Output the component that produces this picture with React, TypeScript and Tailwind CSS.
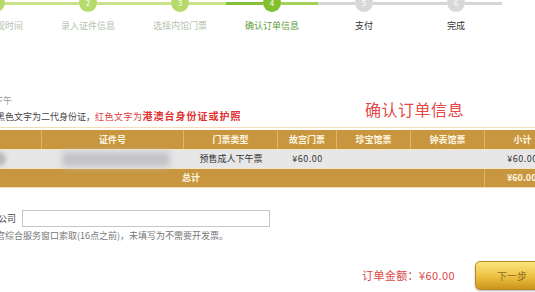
const steps = [
  { n: 1, label: '选择参观时间', state: 'done' },
  { n: 2, label: '录入证件信息', state: 'done' },
  { n: 3, label: '选择内馆门票', state: 'done' },
  { n: 4, label: '确认订单信息', state: 'current' },
  { n: 5, label: '支付', state: 'todo' },
  { n: 6, label: '完成', state: 'todo' },
]

const lineColors: [string, string][] = [
  ['bg-[#c9e389]', 'bg-[#c9e389]'],
  ['bg-[#c9e389]', 'bg-[#c9e389]'],
  ['bg-[#c9e389]', 'bg-[#c9e389]'],
  ['bg-[#86bf3a]', 'bg-[#a3d058]'],
  ['bg-[#d6d6d6]', 'bg-[#d6d6d6]'],
  ['bg-[#d6d6d6]', 'bg-[#d6d6d6]'],
]

function Steps() {
  return (
    <div className="flex ml-[-50px] mt-[-6px]">
      {steps.map((step, i) => (
        <div key={step.n} className="w-[92px] flex flex-col items-center">
          <div className="flex w-full items-center h-[18px]">
            <div className={`flex-1 h-[3px] ${lineColors[i][0]}`} />
            <div
              className={
                step.state === 'done'
                  ? 'size-[18px] rounded-full bg-[#b7db6a] text-white text-[8px] flex items-center justify-center'
                  : step.state === 'current'
                    ? 'size-[18px] rounded-full bg-[#82c030] text-white text-[8px] flex items-center justify-center'
                    : 'size-[18px] rounded-full bg-[#d8d8d8] text-white text-[8px] flex items-center justify-center'
              }
            >
              {step.n}
            </div>
            <div className={`flex-1 h-[3px] ${lineColors[i][1]}`} />
          </div>
          <span
            className={
              step.state === 'done'
                ? 'mt-[7px] text-[9px] leading-[13px] text-[#b4bfae]'
                : step.state === 'current'
                  ? 'mt-[7px] text-[9px] leading-[13px] text-[#5b9c3a]'
                  : 'mt-[7px] text-[9px] leading-[13px] text-[#333]'
            }
          >
            {step.label}
          </span>
        </div>
      ))}
    </div>
  )
}

const cols = 'grid grid-cols-[102px_142px_94px_59px_74px_74px_75px]'

export default function App() {
  return (
    <div className="w-[535px] h-[292px] overflow-hidden bg-white font-['Noto_Sans_CJK_SC',sans-serif]">
      <Steps />

      <div className="flex items-center mt-[61px]">
        <div className="w-[365px] flex flex-col text-[9px] leading-[15px]">
          <span className="ml-[-6px] text-[#999]">下午</span>
          <span className="ml-[-4px] text-[#444] whitespace-nowrap">
            黑色文字为二代身份证，
            <span className="text-[#e03c3c] tracking-[0.5px]">红色文字为</span>
            <span className="text-[#e03030] font-bold text-[10px] tracking-[1px]">港澳台身份证或护照</span>
          </span>
        </div>
        <h1 className="text-[16px] leading-[20px] text-[#e24a4a] tracking-[0.5px]">确认订单信息</h1>
      </div>

      <div className="ml-[-60px] w-[620px] mt-[3px] border-t border-[#f3dcb8] pt-[2px] text-[9px]">
        <div className={`${cols} h-[19px] bg-[#c8963f] text-[#fff6e2] font-bold`}>
          <div className="border-r border-[#dbb574]" />
          <div className="border-r border-[#dbb574] flex items-center justify-center">证件号</div>
          <div className="border-r border-[#dbb574] flex items-center justify-center">门票类型</div>
          <div className="border-r border-[#dbb574] flex items-center justify-center">故宫门票</div>
          <div className="border-r border-[#dbb574] flex items-center justify-center">珍宝馆票</div>
          <div className="border-r border-[#dbb574] flex items-center justify-center">钟表馆票</div>
          <div className="flex items-center justify-center">小计</div>
        </div>
        <div className={`${cols} h-[20px] bg-[#e7e7e7] text-[#333] border-y border-[#f5e6c8]`}>
          <div className="flex items-center justify-end pr-[36px]">
            <div className="w-[14px] h-[14px] rounded-full bg-[#b9b9b9] blur-[2px]" />
          </div>
          <div className="flex items-center pl-[20px]">
            <div className="w-[108px] h-[15px] bg-[#c4c4c8] blur-[3px]" />
          </div>
          <div className="flex items-center justify-center">预售成人下午票</div>
          <div className="flex items-center justify-center tracking-[0.5px]">¥60.00</div>
          <div />
          <div />
          <div className="flex items-center justify-center tracking-[0.5px]">¥60.00</div>
        </div>
        <div className="flex h-[19px] bg-[#c8963f] text-[#fff6e2] font-bold border-b border-[#f1ddb6]">
          <div className="w-[545px] border-r border-[#dbb574] flex items-center pl-[242px]">总计</div>
          <div className="flex-1 flex items-center pl-[22px]">¥60.00</div>
        </div>
      </div>

      <div className="flex items-center mt-[22px] text-[9px]">
        <span className="ml-[-2px] text-[#444]">公司</span>
        <div className="ml-[6px] w-[248px] h-[17px] border border-[#c6c6c6] bg-white" />
      </div>
      <p className="ml-[-4px] mt-[2px] text-[9px] leading-[13px] text-[#777] whitespace-nowrap">
        宫综合服务窗口索取(16点之前)，未填写为不需要开发票。
      </p>

      <div className="flex items-center justify-end mt-[19px] mr-[-6px]">
        <span className="text-[11px] text-[#d94848] tracking-[0.4px]">订单金额：¥60.00</span>
        <button className="ml-[20px] w-[66px] h-[29px] rounded-[5px] border border-[#b98b22] bg-gradient-to-b from-[#fbe57f] via-[#efc445] to-[#cc9419] shadow-[0_1px_2px_rgba(0,0,0,0.3)] text-[10px] text-[#8d6a28] text-left pl-[21px]">
          下一步
        </button>
      </div>
    </div>
  )
}
